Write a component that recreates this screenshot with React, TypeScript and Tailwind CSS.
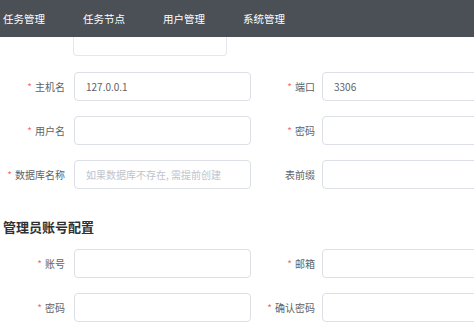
import React from 'react';

const navItems = ['任务管理', '任务节点', '用户管理', '系统管理'];

type Field = {
  label: string;
  required?: boolean;
  value?: string;
  placeholder?: string;
};

function FormField({ field, labelClass }: { field: Field; labelClass: string }) {
  return (
    <>
      <div className={`flex items-center justify-end shrink-0 text-[10px] text-[#606266] ${labelClass}`}>
        {field.required && <span className="text-[#f56c6c] mr-[3px]">*</span>}
        <span>{field.label}</span>
      </div>
      <div className="w-[177px] h-[29px] shrink-0 border border-[#dcdfe6] rounded-[4px] bg-white flex items-center pl-[11px] text-[10px]">
        {field.value ? (
          <span className="text-[#606266]">{field.value}</span>
        ) : field.placeholder ? (
          <span className="text-[#c0c4cc]">{field.placeholder}</span>
        ) : null}
      </div>
    </>
  );
}

function FormRow({ left, right }: { left: Field; right: Field }) {
  return (
    <div className="flex items-center mb-[15px]">
      <FormField field={left} labelClass="w-[74px] pr-[9px]" />
      <FormField field={right} labelClass="w-[71px] pr-[7px]" />
    </div>
  );
}

export default function App() {
  const dbRows: [Field, Field][] = [
    [
      { label: '主机名', required: true, value: '127.0.0.1' },
      { label: '端口', required: true, value: '3306' }
    ],
    [
      { label: '用户名', required: true },
      { label: '密码', required: true }
    ],
    [
      { label: '数据库名称', required: true, placeholder: '如果数据库不存在, 需提前创建' },
      { label: '表前缀' }
    ]
  ];

  const adminRows: [Field, Field][] = [
    [
      { label: '账号', required: true },
      { label: '邮箱', required: true }
    ],
    [
      { label: '密码', required: true },
      { label: '确认密码', required: true }
    ]
  ];

  return (
    <div
      className="w-[474px] h-[326px] overflow-hidden bg-white"
      style={{ fontFamily: '"Noto Sans CJK SC", "Noto Sans", sans-serif' }}
    >
      {/* Top nav */}
      <div className="h-[37px] bg-[#4b5056] flex items-center pl-[3px]">
        {navItems.map((item) => (
          <div key={item} className="w-[80px] text-[10.5px] text-white">
            {item}
          </div>
        ))}
      </div>

      {/* Form */}
      <div className="w-[520px]">
        <div className="ml-[73px] w-[154px] h-[19px] border border-t-0 border-[#e4e7ed] rounded-b-[4px] mb-[16px]" />

        {dbRows.map(([l, r], i) => (
          <FormRow key={i} left={l} right={r} />
        ))}

        {/* Admin account section */}
        <h2 className="pl-[3px] text-[13px] font-bold text-[#303133] leading-[20px] mt-[28px] mb-[12px]">
          管理员账号配置
        </h2>

        {adminRows.map(([l, r], i) => (
          <FormRow key={i} left={l} right={r} />
        ))}
      </div>
    </div>
  );
}
